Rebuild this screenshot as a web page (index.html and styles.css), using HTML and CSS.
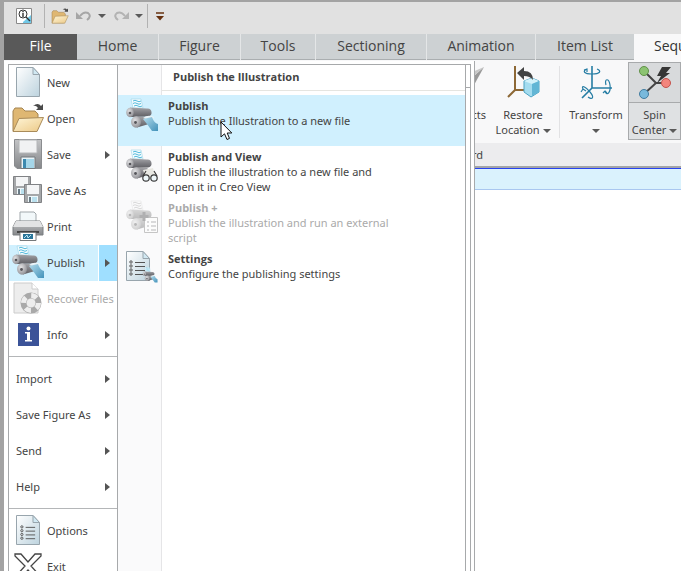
FILE: index.html
```html
<!DOCTYPE html>
<html lang="en">
<head>
<meta charset="utf-8">
<title>Creo Illustrate</title>
<link rel="stylesheet" href="styles.css">
</head>
<body>
<svg class="defs" aria-hidden="true">
  <defs>
    <linearGradient id="paper" x1="0" y1="0" x2="1" y2="1"><stop offset="0" stop-color="#fff"/><stop offset="1" stop-color="#bdd3de"/></linearGradient>
    <linearGradient id="gold" x1="0" y1="0" x2="1" y2="1"><stop offset="0" stop-color="#fff6d8"/><stop offset="1" stop-color="#ecc987"/></linearGradient>
    <linearGradient id="metal" x1="0" y1="0" x2="0" y2="1"><stop offset="0" stop-color="#c3c4c6"/><stop offset="1" stop-color="#85878a"/></linearGradient>
    <linearGradient id="roll" x1="0" y1="0" x2="0" y2="1"><stop offset="0" stop-color="#a5a5a9"/><stop offset=".5" stop-color="#7f7f84"/><stop offset="1" stop-color="#5f5f64"/></linearGradient>
    <radialGradient id="cap" cx=".4" cy=".35" r=".7"><stop offset="0" stop-color="#e2e2e4"/><stop offset="1" stop-color="#8d8d92"/></radialGradient>
    <linearGradient id="sheet" x1="0" y1="0" x2="1" y2="1"><stop offset="0" stop-color="#b5dcec"/><stop offset="1" stop-color="#4292ba"/></linearGradient>
    <symbol id="rollers" viewBox="0 0 32 34">
      <path d="M5 1H15L17 10H7Z" fill="#f4fcff" stroke="#9ed3e6" stroke-width=".6"/>
      <path d="M7 3q2-1.500 4 0t4 0M7 5.500q2-1.500 4 0t4 0M8 8q2-1.500 4 0t4 0" fill="none" stroke="#55bbdc"/>
      <path d="M4 9.500L21 10.500a4 4 0 0 1 1 8L5 19Z" fill="url(#roll)"/>
      <ellipse cx="4" cy="14.500" rx="3.800" ry="4.700" fill="url(#cap)"/><circle cx="4" cy="15" r="1.300" fill="#55555a"/>
      <path d="M10 18.500L21 19q4 3 2 7L11 29.500Z" fill="url(#roll)"/>
      <ellipse cx="10" cy="24" rx="5" ry="5.800" fill="url(#cap)"/><circle cx="9.500" cy="24.500" r="1.400" fill="#55555a"/>
    </symbol>
    <symbol id="publish" viewBox="0 0 32 34">
      <use href="#rollers" width="32" height="34"/>
      <path d="M17 20q5-4 11-1l-2 4Z" fill="#eaf4f8"/>
      <path d="M17 21L26 19Q28 25 32 26V33H26Q22 27 17 21Z" fill="url(#sheet)"/>
    </symbol>
    <symbol id="page" viewBox="0 0 24 30">
      <path d="M.5.5H17L23.500 7.500V29.500H.5Z" fill="url(#paper)" stroke="#98a5ad"/>
      <path d="M17 .5V7.500H23.500Z" fill="#d1e8f2" stroke="#98a5ad"/>
    </symbol>
    <symbol id="folder" viewBox="0 0 32 30">
      <path d="M1 28V8L3 5H10L13 8H23L26 11V16L23 28Z" fill="#dfb772" stroke="#a48451"/>
      <path d="M1 28.500L7 15.500L31.500 14.500L25 28.500Z" fill="url(#gold)" stroke="#a98b5a"/>
      <path d="M21 3q5-4 8 0l2-2v6h-7l2-2q-2-3-5-2Z" fill="#4a4a4a"/>
    </symbol>
    <symbol id="floppy" viewBox="0 0 28 30">
      <path d="M.5.5H27.500V29.500H3L.5 27Z" fill="url(#metal)" stroke="#8a8c8f"/>
      <path d="M5 1H23V14H5Z" fill="#f1f2f3" stroke="#b4b6b8"/>
      <path d="M7 18H21V29.500H7Z" fill="#e9f4f8" stroke="#74797d"/>
      <path d="M9 20H12V29H9Z" fill="#3c89af"/><path d="M12 20H20V29H12Z" fill="#a5d6e9"/>
    </symbol>
    <symbol id="floppy-light" viewBox="0 0 18 19">
      <path d="M.5.5H17.500V18.500H.5Z" fill="#a5a7a9" stroke="#808285"/>
      <path d="M3 1H15V10H3Z" fill="#f4f5f6"/>
      <path d="M4 12H14V18H4Z" fill="#eef7fa"/><path d="M5 13H7V18H5Z" fill="#6b7c86"/><path d="M8 13H13V18H8Z" fill="#b9e0ee"/>
    </symbol>
    <symbol id="lines" viewBox="0 0 18 18">
      <g fill="none" stroke="#555"><circle cx="2" cy="2" r="1.200"/><circle cx="2" cy="6" r="1.200"/><circle cx="2" cy="10" r="1.200"/><circle cx="2" cy="14" r="1.200"/><path d="M6 2.500H16M6 6.500H16M6 10.500H16M6 14.500H16"/></g>
    </symbol>
  </defs>
</svg>

<div class="app">
  <header class="quick">
    <button class="app-icon" aria-label="Application menu"><svg width="16" height="16" viewBox="0 0 16 16"><path d="M.5.5H15.500V15.500H.5Z" fill="#fff" stroke="#8a8a8a"/><path d="M7 14L15 7V15H7Z" fill="#71c9e8"/><circle cx="7" cy="6" r="4" fill="#fff" stroke="#333"/><path d="M7 3v1.200M7 5v4M10 9l4 4" stroke="#333" stroke-width="1.400"/></svg></button>
    <span class="bar"></span>
    <button aria-label="Open file"><svg width="18" height="16"><use href="#folder"/></svg></button>
    <button class="undo" aria-label="Undo"><svg width="16" height="12" viewBox="0 0 16 12"><path d="M4 6Q8 1 12 3Q16 6 11 10" fill="none" stroke="#a6a6a6" stroke-width="2"/><path d="M0 2V9H7Z" fill="#a6a6a6"/></svg></button>
    <button class="tri" aria-label="Undo list"></button>
    <button class="redo" aria-label="Redo"><svg width="16" height="12" viewBox="0 0 16 12"><path d="M12 6Q8 1 4 3Q0 6 5 10" fill="none" stroke="#b3b3b3" stroke-width="2"/><path d="M16 2V9H9Z" fill="#b3b3b3"/></svg></button>
    <button class="tri" aria-label="Redo list"></button>
    <span class="bar last"></span>
    <button aria-label="Customize toolbar"><svg width="8" height="9" viewBox="0 0 8 9"><path d="M0 1H8" stroke="#66300f" stroke-width="1.500"/><path d="M0 4H8L4 8.500Z" fill="#66300f"/></svg></button>
  </header>

  <nav class="tabs">
    <button class="file">File</button>
    <button class="home">Home</button>
    <button class="figure">Figure</button>
    <button class="tools">Tools</button>
    <button class="sectioning">Sectioning</button>
    <button class="animation">Animation</button>
    <button class="items">Item List</button>
    <button class="current">Sequencing</button>
  </nav>

  <section class="ribbon">
    <button class="tool objects"><svg width="32" height="36" viewBox="0 0 32 36"><path d="M30 2L15 29L11 19Z" fill="#999"/><path d="M30 2L11 19L2 14Z" fill="#c8c8c8"/></svg><span>Objects</span></button>
    <button class="tool restore"><svg width="34" height="36" viewBox="0 0 34 36"><path d="M9 1V25L2 32M9 25H18" fill="none" stroke="#8d6836" stroke-width="2"/><path d="M18 16L26 13L33 16V27L25 32L18 27Z" fill="#a4dcef" stroke="#4da3c4"/><path d="M18 16L26 13L33 16L26 19Z" fill="#d4f2fa"/><path d="M26 19L33 16V27L26 31Z" fill="#62b6d5"/><path d="M11 8L18 2V6Q27 6 27 15Q24 11 18 11V15Z" fill="#434343"/></svg><span>Restore<br>Location <i class="tri"></i></span></button>
    <span class="divider"></span>
    <button class="tool transform"><svg width="34" height="36" viewBox="0 0 34 36"><g fill="none" stroke="#267da4" stroke-width="1.200"><path d="M13 1V23H33M13 23L3 33" stroke-width="1.600"/><path d="M8 4C3 6 5 9 13 9S23 6 18 4M5 5l3-1 0 3M27 20C25 13 30 13 31 20S28 32 26 26M24 28l2-2 2 2M4 24C2 20 6 21 11 27S13 35 9 32M2 27l2-3 3 2"/></g></svg><span>Transform<br><i class="tri"></i></span></button>
    <button class="tool spin"><svg width="36" height="36" viewBox="0 0 36 36"><path d="M7 6L19 18L7 29M19 18H29" fill="none" stroke="#444" stroke-width="2"/><circle cx="7" cy="6" r="4.500" fill="#8cc372" stroke="#609148"/><circle cx="7" cy="29" r="4.500" fill="#79b9dc" stroke="#427ca0"/><circle cx="29" cy="18" r="4.500" fill="#f3857d" stroke="#c4534d"/><path d="M25 2H34L29 8H33L20 18L24 11H20Z" fill="#363636"/></svg><span>Spin<br>Center <i class="tri"></i></span></button>
  </section>
  <div class="group">Standard</div>
  <div class="strip"></div>
  <main></main>

  <div class="file-menu">
    <ul class="commands">
      <li><button><svg width="24" height="30"><use href="#page"/></svg><span>New</span></button></li>
      <li><button><svg width="32" height="30"><use href="#folder"/></svg><span>Open</span></button></li>
      <li><button class="more"><svg width="28" height="30"><use href="#floppy"/></svg><span>Save</span></button></li>
      <li><button><svg width="30" height="28" viewBox="0 0 30 28"><use href="#floppy-light" width="18" height="19"/><use href="#floppy-light" x="11" y="8" width="18" height="19"/></svg><span>Save As</span></button></li>
      <li><button><svg width="32" height="30" viewBox="0 0 32 30"><path d="M8 11V1H22L24 3V11" fill="#f2f8fa" stroke="#a0a7ab"/><path d="M4 10H28L31 16V24H1V16Z" fill="url(#metal)" stroke="#7b7e81"/><path d="M4 10H28L31 16H1Z" fill="#e2e3e4"/><path d="M5 21H27" stroke="#444" stroke-width="2"/><path d="M8 21.500H24V29.500H8Z" fill="#fff" stroke="#76797b"/><path d="M11 23H21V28H11Z" fill="#2a7599"/><path d="M12 27l3-3 1 3 3-3" fill="none" stroke="#b8e3f2"/></svg><span>Print</span></button></li>
      <li><button class="more selected"><svg width="32" height="34"><use href="#publish"/></svg><span>Publish</span></button></li>
      <li><button disabled><svg width="30" height="32" viewBox="0 0 30 32"><path d="M1 1H19L25 7V31H1Z" fill="#ededed" stroke="#ccc"/><path d="M19 1V7H25" fill="#fff" stroke="#ccc"/><circle cx="18" cy="21" r="7.500" fill="none" stroke="#a9a9a9" stroke-width="6"/><circle cx="18" cy="21" r="7.500" fill="none" stroke="#eee" stroke-width="5" stroke-dasharray="6 5.780"/></svg><span>Recover Files</span></button></li>
      <li><button class="more"><svg width="21" height="23" viewBox="0 0 21 23"><path d="M0 0H21V23H0Z" fill="#3b5398"/><circle cx="10.500" cy="5.500" r="2" fill="#fff"/><path d="M7 9H12V17H14V18.500H7V17H9V10.500H7Z" fill="#fff"/></svg><span>Info</span></button></li>
      <li class="rule"></li>
      <li><button class="more plain">Import</button></li>
      <li><button class="more plain">Save Figure As</button></li>
      <li><button class="more plain">Send</button></li>
      <li><button class="more plain">Help</button></li>
      <li class="rule"></li>
      <li><button><svg width="24" height="30" viewBox="0 0 24 30"><use href="#page"/><use href="#lines" x="4" y="10" width="17" height="17"/></svg><span>Options</span></button></li>
      <li><button><svg width="28" height="26" viewBox="0 0 28 26"><path d="M1 1H7L14 9L21 1H27V3L17 13L27 24V25H21L14 17L7 25H1V24L11 13L1 3Z" fill="#fff" stroke="#444" stroke-width="1.300"/></svg><span>Exit</span></button></li>
    </ul>

    <div class="submenu">
      <h2>Publish the Illustration</h2>
      <button class="entry active"><svg width="32" height="34"><use href="#publish"/></svg><span><b>Publish</b>Publish the Illustration to a new file</span></button>
      <button class="entry"><svg width="32" height="34" viewBox="0 0 32 34"><use href="#rollers"/><path d="M17 21L27 19L30 30H20Z" fill="#e8e8e3"/><g fill="#eef7fa" stroke="#3b3b3b" stroke-width="1.200"><circle cx="20" cy="29" r="3.200"/><circle cx="28" cy="29" r="3.200"/><path d="M17 27L20 22M31 27L28 22" fill="none"/></g></svg><span><b>Publish and View</b>Publish the illustration to a new file and open it in Creo View</span></button>
      <button class="entry" disabled><svg class="faded" width="32" height="34" viewBox="0 0 32 34"><use href="#rollers"/><path d="M18.500 17.500H31.500V32.500H18.500Z" fill="#fff" stroke="#777"/><path d="M21 22h2M25 22h5M21 26h2M25 26h5M21 30h2M25 30h5" stroke="#555"/><path d="M18 12V21M13.500 16.500H22.500" stroke="#444" stroke-width="3"/></svg><span><b>Publish +</b>Publish the illustration and run an external script</span></button>
      <button class="entry"><svg width="32" height="34" viewBox="0 0 32 34"><use href="#page" width="24" height="30"/><use href="#lines" x="3" y="9" width="18" height="18"/><use href="#publish" x="16" y="16" width="16" height="16"/></svg><span><b>Settings</b>Configure the publishing settings</span></button>
      <svg class="pointer" width="13" height="20" viewBox="0 0 13 20"><path d="M1 1V16L4.500 12.800L7 18.500L9.500 17.400L7.200 12H11.800Z" fill="#fff" stroke="#111"/></svg>
    </div>
    <div class="edge"></div>
  </div>
</div>
</body>
</html>
```
FILE: styles.css
```css
* { box-sizing: border-box; }
body {
  margin: 0;
  height: 100vh;
  overflow: hidden;
  font: 11px/15px "Noto Sans", "Open Sans", sans-serif;
  color: #444;
  background: #fff;
}
button {
  margin: 0;
  padding: 0;
  border: 0;
  background: none;
  font: inherit;
  color: inherit;
}
svg { display: block; flex: none; }
.defs { position: absolute; width: 0; height: 0; }
.app {
  position: relative;
  display: flex;
  flex-direction: column;
  height: 100vh;
  overflow: hidden;
  border-top: 2px solid #a3a3a3;
  border-left: 4px solid #a3a3a3;
}

.quick {
  display: flex;
  flex: none;
  align-items: center;
  height: 32px;
  padding: 0 0 4px 12px;
  background: #e1e1e1;
}
.bar { width: 1px; height: 24px; margin: 0 6px 0 12px; background: #b2b2b2; }
.bar.last { margin: 0 8px 0 4px; }
.undo, .redo { margin: 0 6px 0 7px; }
.tri {
  display: inline-block;
  border: 4px solid transparent;
  border-top-color: #5a5a5a;
  border-bottom: 0;
  vertical-align: middle;
}

.tabs {
  display: flex;
  flex: none;
  height: 26px;
  background: #cdd1d3;
  border-bottom: 1px solid #aaaeb0;
  font-family: "Open Sans", "Noto Sans", sans-serif;
  font-size: 14px;
}
.tabs button {
  flex: none;
  height: 26px;
  padding-bottom: 3px;
  border-right: 1px solid #e4e6e7;
}
.tabs .file { width: 73px; color: #fff; background: #595959; border: 0; }
.tabs .home { width: 82px; }
.tabs .figure { width: 82px; }
.tabs .tools { width: 75px; }
.tabs .sectioning { width: 111px; }
.tabs .animation { width: 109px; }
.tabs .items { width: 98px; border: 0; }
.tabs .current { padding: 0 20px 3px; background: #f8f8f9; color: #333; }

.ribbon {
  display: flex;
  flex: none;
  height: 83px;
  padding: 2px 0 3px 434px;
  background: #f8f8f9;
}
.tool {
  display: flex;
  flex: none;
  flex-direction: column;
  align-items: center;
  padding-top: 3px;
  gap: 6px;
}
.tool span { white-space: nowrap; }
.objects { width: 52px; align-items: flex-end; padding-right: 4px; }
.restore { width: 66px; }
.divider { width: 1px; height: 72px; margin: 4px 4px 0 3px; background: #e2e2e4; }
.transform { width: 64px; }
.spin {
  width: 53px;
  padding-top: 2px;
  border: 1px solid #a8aaac;
  background: linear-gradient(#d8dadc 39px, #a8aaac 39px, #a8aaac 40px, #dfe1e3 40px);
}
.group {
  flex: none;
  height: 25px;
  padding: 4px 0 0 432px;
  border-bottom: 2px solid #a3a5a8;
  background: #ececee;
}
.strip {
  flex: none;
  height: 22px;
  background: #daf2fd;
  border-top: 1px solid #2741f0;
  border-bottom: 1px solid #a9c7f0;
}
main { flex: 1; background: #fff; }

.file-menu {
  position: absolute;
  top: 59px;
  left: 0;
  bottom: 0;
  display: flex;
  overflow: hidden;
  padding: 3px 3px 0;
  border-right: 1px solid #a7a9ab;
  background: #fff;
}
.commands {
  flex: none;
  width: 110px;
  margin: 0 0 0 1px;
  padding: 0;
  list-style: none;
  border: 1px solid #a7a9ab;
  border-bottom: 0;
}
.commands button {
  position: relative;
  display: grid;
  grid-template-columns: 36px auto;
  column-gap: 1px;
  align-items: center;
  justify-items: center;
  justify-content: start;
  width: 100%;
  height: 36px;
  padding: 0 0 2px 1px;
  white-space: nowrap;
  text-align: left;
}
.commands .plain { display: block; padding-left: 7px; }
.commands .more::after {
  content: "";
  position: absolute;
  top: 14px;
  right: 7px;
  border: 4px solid transparent;
  border-left: 5px solid #555;
  border-right: 0;
}
.commands .selected { background: linear-gradient(90deg, #d0f0fe 89px, #fff 89px, #fff 90px, #9fdfff 90px); }
.commands button:disabled, .entry:disabled { color: #aaa; }
.rule { height: 8px; padding-top: 3px; }
.rule::before { content: ""; display: block; height: 1px; background: #b4b6b8; }

.submenu {
  position: relative;
  width: 348px;
  border: 1px solid #a7a9ab;
  border-width: 1px 1px 0 0;
  background: linear-gradient(90deg, #fafafb 43px, #e5e5e7 43px, #e5e5e7 44px, #fff 44px);
}
.submenu h2 {
  height: 26px;
  margin: 0 0 4px 44px;
  padding: 4px 0 0 11px;
  border-bottom: 1px solid #e5e5e1;
  font: bold 11px/15px "Open Sans", "Noto Sans", sans-serif;
}
.entry {
  display: flex;
  gap: 10px;
  width: 100%;
  height: 51px;
  padding: 3px 70px 0 8px;
  text-align: left;
}
.entry.active { background: #d0f0fe; }
.entry b { display: block; font-family: "Open Sans", "Noto Sans", sans-serif; }
.faded { opacity: .4; filter: grayscale(1); }
.pointer { position: absolute; left: 102px; top: 56px; }
.edge {
  width: 5px;
  border: 1px solid #a7a9ab;
  border-width: 1px 1px 0 0;
  background: linear-gradient(#fff 22px, #a7a9ab 22px, #a7a9ab 23px, #fff 23px);
}
```
